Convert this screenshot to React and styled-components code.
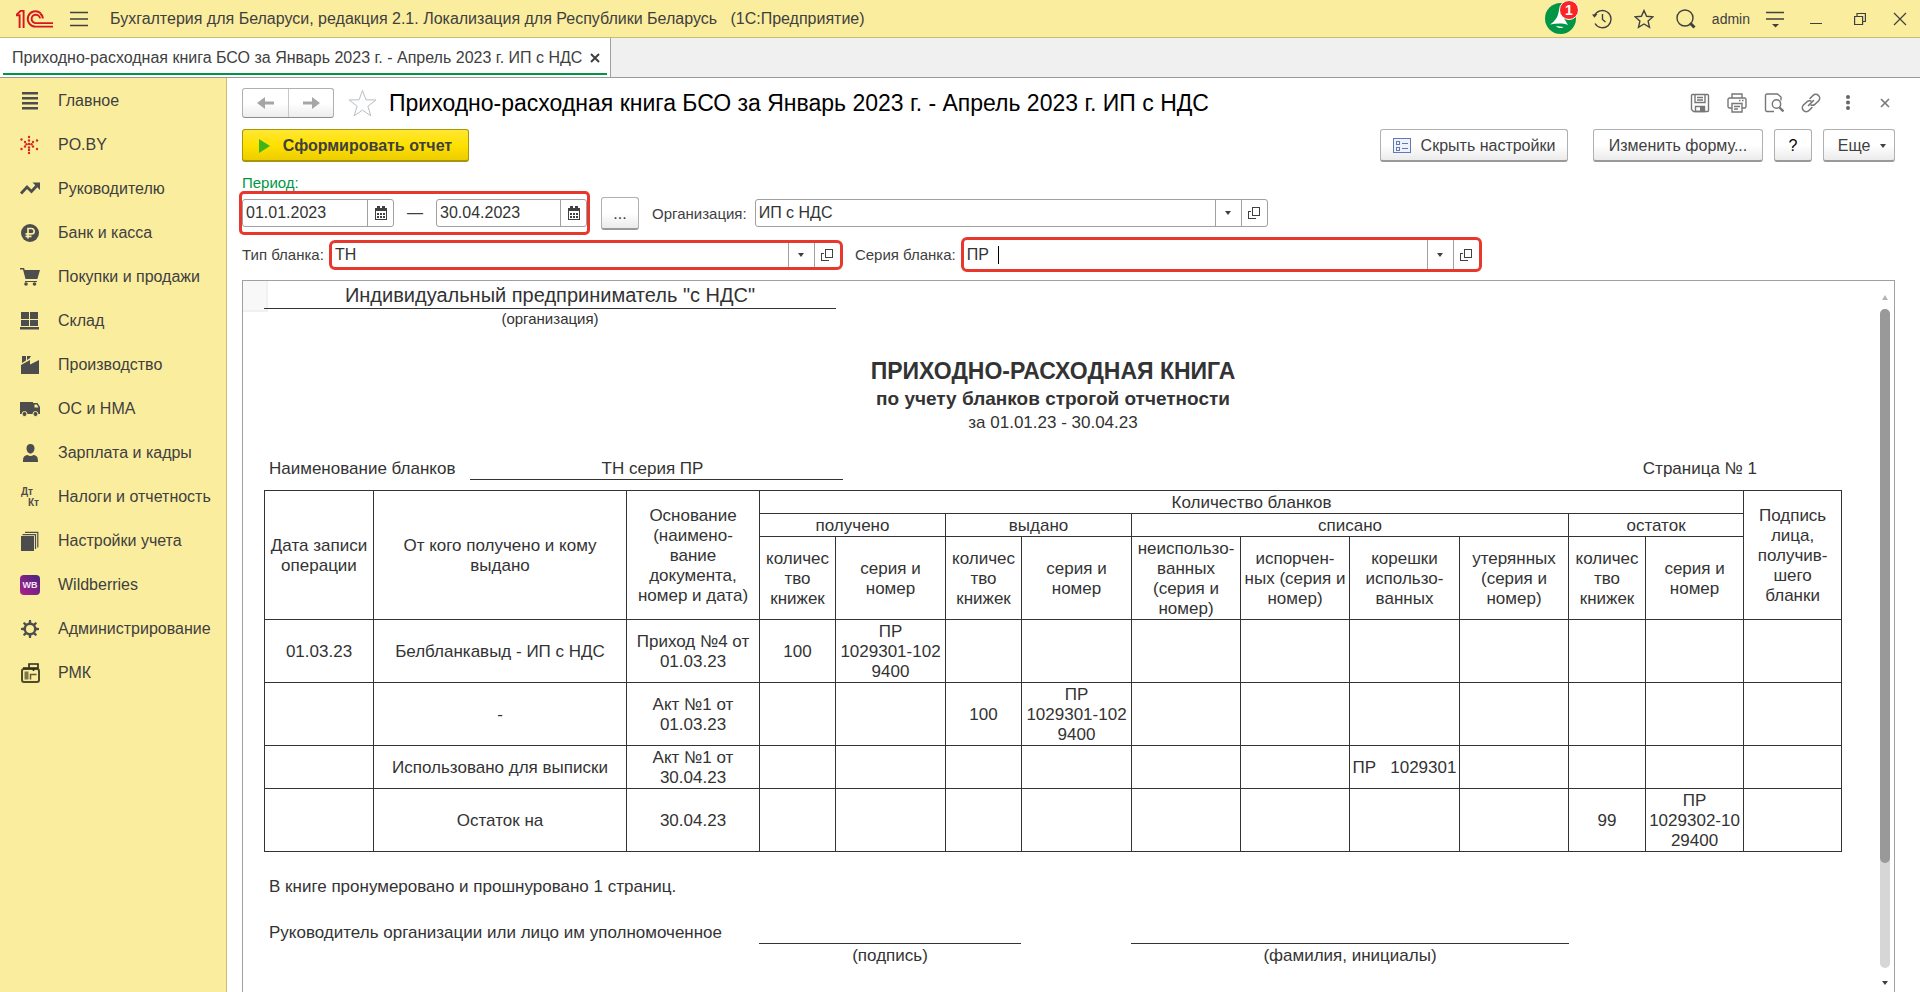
import React from 'react'
import styled, { createGlobalStyle } from 'styled-components'

const colors = {
  yellow: '#fbed9e',
  yellowLine: '#c9bd72',
  line: '#a0a0a0',
  text: '#404040',
  ink: '#333333',
  icon: '#4d4d4d',
  green: '#009646',
  mark: '#e8382d',
}

const GlobalStyle = createGlobalStyle`
  * { box-sizing: border-box; }
  body {
    margin: 0;
    background: white;
    font-family: "Liberation Sans", Arial, sans-serif;
    font-size: 16px;
    color: ${colors.text};
  }
  button, input { font: inherit; color: inherit; }
`

const Page = styled.div`
  height: 100vh;
  display: flex;
  flex-direction: column;
  overflow: hidden;
`
const TopBar = styled.header`
  height: 38px;
  flex-shrink: 0;
  display: flex;
  align-items: center;
  padding: 0 1px 0 15px;
  background-color: ${colors.yellow};
  border-bottom: 1px solid ${colors.yellowLine};
`
const PlainButton = styled.button`
  display: flex;
  align-items: center;
  justify-content: center;
  flex-shrink: 0;
  width: ${props => props.$width || 20}px;
  height: 32px;
  padding: 0;
  border: 0;
  background: none;
  cursor: pointer;
`
const AppTitle = styled.div`
  flex: 1;
  padding-left: 5px;
  white-space: pre;
`
const TopTools = styled.div`
  display: flex;
  align-items: center;
`
const BellButton = styled(PlainButton)`
  position: relative;
  margin-right: 6px;
`
const Badge = styled.span`
  position: absolute;
  top: -3px;
  right: -3px;
  width: 20px;
  height: 20px;
  border: 1px solid white;
  border-radius: 50%;
  background-color: #fb2424;
  color: white;
  font-size: 14px;
  font-weight: bold;
  line-height: 18px;
`
const UserName = styled.span`
  padding: 0 6px 0 5px;
  font-size: 14px;
`
const TabBar = styled.div`
  height: 40px;
  flex-shrink: 0;
  display: flex;
  background-color: #f0f0f0;
  border-bottom: 1px solid #999999;
`
const Tab = styled.div`
  display: flex;
  align-items: center;
  padding: 0 2px 0 12px;
  background: white;
  border-right: 1px solid ${colors.line};
  box-shadow: inset 3px 0 white, inset -3px 0 white, inset 0 -2px white, inset 0 -4px ${colors.green};
`
const Body = styled.div`
  flex: 1;
  min-height: 0;
  display: flex;
`
const Sidebar = styled.nav`
  width: 227px;
  flex-shrink: 0;
  padding-top: 1px;
  background-color: ${colors.yellow};
  border-right: 1px solid ${colors.yellowLine};
`
const MenuLink = styled.a`
  height: 44px;
  display: flex;
  align-items: center;
  gap: 18px;
  padding-left: 20px;
  color: ${colors.text};
  text-decoration: none;
`
const Main = styled.main`
  flex: 1;
  min-width: 0;
  display: flex;
  flex-direction: column;
  padding: 10px 25px 0 15px;
`
const TitleRow = styled.div`
  height: 30px;
  display: flex;
  align-items: center;
`
const NavButtons = styled.div`
  display: flex;
  height: 30px;
  border: 1px solid #b0b0b0;
  border-bottom-color: #8c8c8c;
  border-radius: 3px;
  background: linear-gradient(white 50%, #ededed);
  button + button { border-left: 1px solid #c8c8c8; }
`
const NavButton = styled(PlainButton)`
  height: 28px;
`
const StarButton = styled(PlainButton)`
  margin: 0 12px 0 14px;
`
const FormTitle = styled.h1`
  flex: 1;
  margin: 0;
  font-size: 23px;
  font-weight: normal;
  color: black;
`
const FormTools = styled.div`
  display: flex;
  gap: 17px;
`
const ButtonRow = styled.div`
  display: flex;
  align-items: center;
  gap: 11px;
  margin-top: 11px;
`
const Button = styled.button`
  display: flex;
  align-items: center;
  justify-content: center;
  gap: 10px;
  flex-shrink: 0;
  width: ${props => props.$width}px;
  height: 33px;
  padding: 2px 0 0;
  border: 1px solid #b0b0b0;
  border-bottom: 2px solid #999999;
  border-radius: 3px;
  background: linear-gradient(white 50%, #ebebeb);
  color: ${props => props.$dark ? 'black' : colors.text};
  cursor: pointer;
`
const PrimaryButton = styled(Button)`
  gap: 13px;
  margin-right: auto;
  border-color: #a89508;
  background: linear-gradient(#ffe733, #ffe100 50%, #eccd00);
  font-weight: bold;
`
const HideButton = styled(Button)`
  margin-right: 14px;
`
const MoreButton = styled(Button)`
  padding-left: 6px;
`
const PeriodLabel = styled.div`
  margin-top: 11px;
  font-size: 15px;
  line-height: 20px;
  color: ${colors.green};
`
const FieldRow = styled.div`
  display: flex;
  align-items: center;
  height: ${props => props.$height}px;
  margin-top: ${props => props.$top}px;
`
const PeriodGroup = styled.div`
  display: flex;
  align-items: center;
  flex: 0 0 345px;
  padding: 5px 0;
  margin-right: 14px;
  border-radius: 2px;
  outline: 3px solid ${colors.mark};
`
const Dash = styled.span`
  width: 42px;
  text-align: center;
`
const Label = styled.label`
  flex-shrink: 0;
  margin: 0 8px 0 ${props => props.$left || 0}px;
  font-size: 15px;
`
const Field = styled.div`
  position: relative;
  display: flex;
  flex: 0 1 ${props => props.$width}px;
  min-width: 0;
  height: ${props => props.$height || 28}px;
  border: ${props => props.$marked ? 0 : 1}px solid ${colors.line};
  border-radius: 3px;
  outline: ${props => props.$marked ? `3px solid ${colors.mark}` : 'none'};
`
const Input = styled.input`
  flex: 1;
  width: 0;
  min-width: 0;
  padding: 0 3px;
  border: 0;
  outline: 0;
  background: none;
  color: ${colors.ink};
`
const FieldButton = styled.button`
  display: flex;
  align-items: center;
  justify-content: center;
  width: 26px;
  padding: 0;
  border: 0;
  border-left: 1px solid ${colors.line};
  background: none;
`
const Caret = styled.span`
  position: absolute;
  left: 34px;
  top: 6px;
  width: 1px;
  height: 18px;
  background-color: black;
`
const ReportPanel = styled.section`
  flex: 1;
  min-height: 0;
  display: flex;
  margin-top: 8px;
  border: 1px solid ${colors.line};
  border-bottom: 0;
`
const Sheet = styled.div`
  position: relative;
  flex: 1;
  min-width: 0;
  padding: 0 38px 0 21px;
  overflow: hidden;
  font-size: 17px;
  color: ${colors.ink};
`
const SheetCorner = styled.div`
  position: absolute;
  z-index: -1;
  top: 0;
  left: 0;
  width: 25px;
  height: 31px;
  background-color: #f8f8f8;
  border-right: 2px solid #f1f1f1;
  border-bottom: 2px solid #f1f1f1;
`
const OrgBlock = styled.div`
  width: 572px;
  text-align: center;
`
const OrgName = styled.div`
  height: 28px;
  border-bottom: 1px solid ${colors.ink};
  font-size: 20px;
  line-height: 28px;
`
const OrgCaption = styled.div`
  font-size: 15px;
  line-height: 20px;
`
const Heading = styled.div`
  margin-top: 28px;
  text-align: center;
  line-height: 20px;
`
const BookTitle = styled.h2`
  margin: 0;
  font-size: 23px;
  line-height: 28px;
`
const BookSubtitle = styled.h3`
  margin: 0;
  padding: 2px 0;
  font-size: 19px;
  line-height: 24px;
`
const NameRow = styled.div`
  display: flex;
  align-items: flex-end;
  margin: 23px 0 10px;
  padding: 0 85px 0 5px;
`
const NameText = styled.div`
  height: 24px;
  line-height: 26px;
`
const NameLabel = styled(NameText)`
  width: 201px;
`
const NameValue = styled(NameText)`
  width: 373px;
  margin-right: auto;
  padding-right: 8px;
  border-bottom: 1px solid ${colors.ink};
  text-align: center;
`
const Table = styled.table`
  width: 100%;
  table-layout: fixed;
  border-collapse: collapse;
  line-height: 20px;
  text-align: center;
  white-space: pre-line;
`
const Row = styled.tr`
  height: ${props => props.$height}px;
`
const HeadCell = styled.th`
  padding: 2px 0 0;
  border: 1px solid ${colors.ink};
  font-weight: normal;
`
const Cell = styled.td`
  padding: 2px 0 0;
  border: 1px solid ${colors.ink};
  white-space: pre-wrap;
`
const Footnote = styled.div`
  margin-top: 25px;
  padding-left: 5px;
  line-height: 20px;
`
const SignRow = styled.div`
  display: flex;
  margin-top: 24px;
  padding-left: 5px;
  line-height: 24px;
`
const SignText = styled.div`
  width: 490px;
`
const Sign = styled.div`
  width: ${props => props.$width}px;
  margin-right: 110px;
  padding-top: 22px;
  text-align: center;
`
const SignCaption = styled.div`
  border-top: 1px solid ${colors.ink};
`
const Scroll = styled.div`
  display: flex;
  flex-direction: column;
  align-items: center;
  width: 10px;
  margin-right: 4px;
`
const ScrollButton = styled.button`
  height: ${props => props.$height}px;
  padding: 0;
  border: 0;
  background: none;
`
const Track = styled.div`
  flex: 1;
  width: 10px;
  border-radius: 5px;
  background-color: #d6d6d6;
`
const Thumb = styled.div`
  height: 84%;
  border-radius: 5px;
  background-color: #999999;
`

const Svg = ({ w = 20, h = 20, children, ...rest }) => (
  <svg width={w} height={h} viewBox={`0 0 ${w} ${h}`} fill="none" aria-hidden="true" {...rest}>
    {children}
  </svg>
)

const Logo = () => (
  <Svg w={38} h={20} stroke="#d8161e" strokeWidth="1.9">
    <path d="M1 6.2h3.6V19" />
    <path d="M1.6 5.8L5.6 1.9H8.6V19" />
    <path d="M25.6 4.2A7.7 7.7 0 1 0 21 17.6H38" />
    <path d="M25 9.4A4.2 4.2 0 1 0 21 14.1H38" />
    <path d="M25.2 4.6a5.8 5.8 0 0 1 2.6 4.8" />
  </Svg>
)

const Down = () => (
  <Svg w={6} h={4}><path d="M0 0h6L3 4z" fill={colors.text} /></Svg>
)

const OpenIcon = () => (
  <Svg w={12} h={12} stroke={colors.text} shapeRendering="crispEdges">
    <path d="M4.500 .5h7v8h-7z M2.500 4.500h-2v7h7v-1" />
  </Svg>
)

const CalendarIcon = () => (
  <Svg w={12} h={14} shapeRendering="crispEdges">
    <path d="M.5 2.500h11v11H.5z" stroke={colors.text} />
    <path d="M0 2h12v3H0z M2 0h3v2H2z M7 0h3v2H7z" fill={colors.text} />
    <path d="M2 7h2v2H2z M5 7h2v2H5z M8 7h2v2H8z M2 10h2v2H2z M5 10h2v2H5z M8 10h2v2H8z" fill={colors.text} />
  </Svg>
)

const gearTeeth = [0, 45, 90, 135, 180, 225, 270, 315]
const poDots = [
  [9, 2], [9, 5.500], [9, 9], [9, 12.500], [9, 18], [9, 15], [5, 7], [5, 11.500], [13, 7], [13, 11.500],
  [1.500, 4.500], [1.500, 14], [17, 5.500], [17, 14], [6.500, 9.200], [11.500, 9.200],
]

const menu = [
  { title: 'Главное', icon: <path d="M2 1h16v2.500H2zM2 6h16v2.500H2zM2 11h16v2.500H2zM2 16h16v2.500H2z" fill={colors.icon} /> },
  { title: 'PO.BY', icon: poDots.map(([x, y]) => <circle key={`${x}-${y}`} cx={x} cy={y} r="1.2" fill="#d9261c" />) },
  {
    title: 'Руководителю',
    icon: <>
      <path d="M1 14.500L7 8l4.500 4.500L17 6.500" stroke={colors.icon} strokeWidth="2.800" />
      <path d="M12.500 3.500H20V11z" fill={colors.icon} />
    </>
  },
  {
    title: 'Банк и касса',
    icon: <>
      <circle cx="10" cy="10" r="9" fill={colors.icon} />
      <path d="M8 15.500V5.500h3.500a2.700 2.700 0 0 1 0 5.400H5.500 M5.500 13.300h6" stroke={colors.yellow} strokeWidth="1.700" />
    </>
  },
  {
    title: 'Покупки и продажи',
    icon: <>
      <path d="M0 1h4l.8 2H20l-2.600 9H5.500L3 2.500H0z" fill={colors.icon} />
      <path d="M5 14.500h12" stroke={colors.icon} />
      <circle cx="6" cy="17" r="1.800" fill={colors.icon} />
      <circle cx="14.500" cy="17" r="1.800" fill={colors.icon} />
    </>
  },
  { title: 'Склад', icon: <path d="M1 1h8v7H1zM10 1h8v7h-8zM1 9h8v6H1zM10 9h8v6h-8zM0 16h19v2.500H0z" fill={colors.icon} /> },
  {
    title: 'Производство',
    icon: <path d="M1 19v-9l9-5v4.500l9-4.500V19z M2 1h4v4.500L2 8z M7 1h4L9.500 3.500 7 5z" fill={colors.icon} />
  },
  {
    title: 'ОС и НМА',
    icon: <>
      <path d="M0 3h13v12H0z M13 4h4.500L20 8v7h-7z" fill={colors.icon} />
      <path d="M14.500 5.500h2.300l1.700 3h-4z" fill={colors.yellow} />
      <circle cx="4.500" cy="15" r="2.500" fill={colors.icon} stroke={colors.yellow} />
      <circle cx="15.500" cy="15" r="2.500" fill={colors.icon} stroke={colors.yellow} />
    </>
  },
  {
    title: 'Зарплата и кадры',
    icon: <path d="M10.500 1c2.600 0 4 1.700 4 4.200 0 2.700-1.600 5.300-4 5.300s-4-2.600-4-5.300C6.500 2.700 7.900 1 10.500 1z M3 19c0-5 .8-6.300 4.500-7 1.800 1.400 4.200 1.400 6 0 3.700.7 4.500 2 4.500 7z" fill={colors.icon} />
  },
  {
    title: 'Налоги и отчетность',
    icon: <g fill={colors.icon} fontSize="10" fontWeight="bold">
      <text x="1" y="8">Дт</text>
      <text x="8" y="19">Кт</text>
    </g>
  },
  {
    title: 'Настройки учета',
    icon: <>
      <path d="M1 5h13v15H1z" fill={colors.icon} />
      <path d="M2.500 3.600h13V18 M5 1.300h12.800V16.500" stroke={colors.icon} strokeWidth="1.200" />
    </>
  },
  {
    title: 'Wildberries',
    icon: <>
      <defs>
        <linearGradient id="wb" x1="0" y1="1" x2="1" y2="0">
          <stop offset="0" stopColor="#b0208a" />
          <stop offset="1" stopColor="#46257f" />
        </linearGradient>
      </defs>
      <rect width="20" height="20" rx="4" fill="url(#wb)" />
      <text x="10" y="13" fontSize="9" fontWeight="bold" textAnchor="middle" fill="#f3e3f5">WB</text>
    </>
  },
  {
    title: 'Администрирование',
    icon: <>
      <circle cx="10" cy="10" r="5.200" stroke={colors.icon} strokeWidth="2.400" />
      {gearTeeth.map(a => <path key={a} d="M8.600 4.500L9 1h2l.4 3.500z" fill={colors.icon} transform={`rotate(${a} 10 10)`} />)}
    </>
  },
  {
    title: 'РМК',
    icon: <>
      <rect x="2" y="6" width="17" height="13" rx="2" stroke="#4f4a2c" strokeWidth="2" />
      <path d="M9 1h9v4H9z M13.500 5v3 M3 5h5" stroke="#2b2818" strokeWidth="1.600" />
      <path d="M4.500 8.500h4v8h-4z" fill="#7d764a" />
      <path d="M10.500 16.500v-5h6" stroke="#5d5735" strokeWidth="1.500" />
    </>
  },
]

const columns = [109, 253, 133, 76, 110, 76, 110, 109, 109, 110, 109, 77, 98, 98]

const rows = [
  { height: 63, cells: ['01.03.23', 'Белбланкавыд - ИП с НДС', 'Приход №4 от\n01.03.23', '100', 'ПР\n1029301-102\n9400', '', '', '', '', '', '', '', '', ''] },
  { height: 63, cells: ['', '-', 'Акт №1 от\n01.03.23', '', '', '100', 'ПР\n1029301-102\n9400', '', '', '', '', '', '', ''] },
  { height: 43, cells: ['', 'Использовано для выписки', 'Акт №1 от\n30.04.23', '', '', '', '', '', '', 'ПР   1029301', '', '', '', ''] },
  { height: 63, cells: ['', 'Остаток на', '30.04.23', '', '', '', '', '', '', '', '', '99', 'ПР\n1029302-10\n29400', ''] },
]

const subHeads = [
  'количес\nтво\nкнижек', 'серия и\nномер', 'количес\nтво\nкнижек', 'серия и\nномер',
  'неиспользо-\nванных\n(серия и\nномер)', 'испорчен-\nных (серия и\nномер)', 'корешки\nиспользо-\nванных',
  'утерянных\n(серия и\nномер)', 'количес\nтво\nкнижек', 'серия и\nномер',
]

const DateField = ({ width, value, label }) => (
  <Field $width={width}>
    <Input defaultValue={value} aria-label={label} />
    <FieldButton aria-label="Календарь"><CalendarIcon /></FieldButton>
  </Field>
)

const ComboField = ({ id, value, children, ...rest }) => (
  <Field {...rest}>
    <Input id={id} defaultValue={value} />
    {children}
    <FieldButton aria-label="Выбрать"><Down /></FieldButton>
    <FieldButton aria-label="Открыть"><OpenIcon /></FieldButton>
  </Field>
)

const Header = () => (
  <TopBar>
    <Logo />
    <PlainButton $width={52} aria-label="Меню">
      <Svg w={18} h={16} stroke={colors.text} strokeWidth="1.500"><path d="M0 1.500h18M0 8h18M0 14.500h18" /></Svg>
    </PlainButton>
    <AppTitle>Бухгалтерия для Беларуси, редакция 2.1. Локализация для Республики Беларусь   (1С:Предприятие)</AppTitle>
    <TopTools>
      <BellButton $width={31} aria-label="Оповещения">
        <Svg w={31} h={31}>
          <circle cx="15.500" cy="15.500" r="15.500" fill={colors.green} />
          <path d="M14 7l9 15c-6-2.500-12-1.500-18-.5 6-4 8-8 9-14.500z" fill="white" />
          <path d="M11 23c2 2.600 6 2.600 7.500 1z" fill="white" />
        </Svg>
        <Badge>1</Badge>
      </BellButton>
      <PlainButton $width={41} aria-label="История">
        <Svg stroke={colors.text} strokeWidth="1.400">
          <path d="M2.400 7A8.600 8.600 0 1 1 3 14.500" />
          <path d="M10.500 5v5.500l3 2.500" />
          <path d="M0 5.500l5.500-.5-3 3.800z" fill={colors.text} stroke="none" />
        </Svg>
      </PlainButton>
      <PlainButton $width={42} aria-label="Избранное">
        <Svg stroke={colors.text} strokeWidth="1.400">
          <path d="M10 1.500l2.600 5.800 6.200.6-4.700 4.200 1.400 6.200L10 15l-5.500 3.300 1.400-6.200L1.200 7.900l6.200-.6z" />
        </Svg>
      </PlainButton>
      <PlainButton $width={42} aria-label="Поиск">
        <Svg stroke={colors.text} strokeWidth="1.400">
          <circle cx="9" cy="9" r="8" />
          <path d="M14 14l4.500 4.500" strokeWidth="3" />
        </Svg>
      </PlainButton>
      <UserName>admin</UserName>
      <PlainButton $width={38} aria-label="Сервис">
        <Svg w={18} h={18} stroke={colors.text} strokeWidth="1.500">
          <path d="M0 2.500h18M0 9h18" />
          <path d="M6 14h7l-3.500 3.500z" fill={colors.text} stroke="none" />
        </Svg>
      </PlainButton>
      <PlainButton $width={44} aria-label="Свернуть">
        <Svg w={12} h={12} stroke={colors.text}><path d="M0 10.500h12" /></Svg>
      </PlainButton>
      <PlainButton $width={43} aria-label="Развернуть">
        <Svg w={12} h={12} stroke={colors.text} strokeWidth="1.200"><path d="M.6 3.500h8v8h-8z M3 3.500v-3h8.400v8H8.600" /></Svg>
      </PlainButton>
      <PlainButton $width={38} aria-label="Закрыть">
        <Svg w={14} h={14} stroke={colors.text} strokeWidth="1.200"><path d="M1 1l12 12M13 1L1 13" /></Svg>
      </PlainButton>
    </TopTools>
  </TopBar>
)

const Report = () => (
  <ReportPanel>
    <Sheet>
      <SheetCorner />
      <OrgBlock>
        <OrgName>Индивидуальный предприниматель "с НДС"</OrgName>
        <OrgCaption>(организация)</OrgCaption>
      </OrgBlock>
      <Heading>
        <BookTitle>ПРИХОДНО-РАСХОДНАЯ КНИГА</BookTitle>
        <BookSubtitle>по учету бланков строгой отчетности</BookSubtitle>
        за 01.01.23 - 30.04.23
      </Heading>
      <NameRow>
        <NameLabel>Наименование бланков</NameLabel>
        <NameValue>ТН серия ПР</NameValue>
        <NameText>Страница № 1</NameText>
      </NameRow>
      <Table>
        <colgroup>
          {columns.map((width, i) => <col key={i} style={{ width }} />)}
        </colgroup>
        <thead>
          <Row $height={23}>
            <HeadCell rowSpan={3}>{'Дата записи\nоперации'}</HeadCell>
            <HeadCell rowSpan={3}>{'От кого получено и кому\nвыдано'}</HeadCell>
            <HeadCell rowSpan={3}>{'Основание\n(наимено-\nвание\nдокумента,\nномер и дата)'}</HeadCell>
            <HeadCell colSpan={10}>Количество бланков</HeadCell>
            <HeadCell rowSpan={3}>{'Подпись\nлица,\nполучив-\nшего\nбланки'}</HeadCell>
          </Row>
          <Row $height={23}>
            <HeadCell colSpan={2}>получено</HeadCell>
            <HeadCell colSpan={2}>выдано</HeadCell>
            <HeadCell colSpan={4}>списано</HeadCell>
            <HeadCell colSpan={2}>остаток</HeadCell>
          </Row>
          <Row $height={83}>
            {subHeads.map((text, i) => <HeadCell key={i}>{text}</HeadCell>)}
          </Row>
        </thead>
        <tbody>
          {rows.map((row, i) => (
            <Row key={i} $height={row.height}>
              {row.cells.map((text, j) => <Cell key={j}>{text}</Cell>)}
            </Row>
          ))}
        </tbody>
      </Table>
      <Footnote>В книге пронумеровано и прошнуровано 1 страниц.</Footnote>
      <SignRow>
        <SignText>Руководитель организации или лицо им уполномоченное</SignText>
        <Sign $width={262}><SignCaption>(подпись)</SignCaption></Sign>
        <Sign $width={438}><SignCaption>(фамилия, инициалы)</SignCaption></Sign>
      </SignRow>
    </Sheet>
    <Scroll>
      <ScrollButton $height={28} aria-label="Вверх">
        <Svg w={6} h={5}><path d="M3 0l3 5H0z" fill="#b5b5b5" /></Svg>
      </ScrollButton>
      <Track><Thumb /></Track>
      <ScrollButton $height={24} aria-label="Вниз"><Down /></ScrollButton>
    </Scroll>
  </ReportPanel>
)

const App = () => (
  <Page>
    <GlobalStyle />
    <Header />
    <TabBar>
      <Tab>
        Приходно-расходная книга БСО за Январь 2023 г. - Апрель 2023 г. ИП с НДС
        <PlainButton $width={26} aria-label="Закрыть вкладку">
          <Svg w={10} h={10} stroke={colors.text} strokeWidth="2"><path d="M1 1l8 8M9 1L1 9" /></Svg>
        </PlainButton>
      </Tab>
    </TabBar>
    <Body>
      <Sidebar>
        {menu.map(item => (
          <MenuLink key={item.title} href="#">
            <Svg>{item.icon}</Svg>
            {item.title}
          </MenuLink>
        ))}
      </Sidebar>
      <Main>
        <TitleRow>
          <NavButtons>
            <NavButton $width={45} aria-label="Назад">
              <Svg w={18} h={14}><path d="M0 7l8-6v4.500h9v3H8V13z" fill="#a6a6a6" /></Svg>
            </NavButton>
            <NavButton $width={45} aria-label="Вперед">
              <Svg w={18} h={14}><path d="M18 7l-8-6v4.500H1v3h9V13z" fill="#a6a6a6" /></Svg>
            </NavButton>
          </NavButtons>
          <StarButton $width={29} aria-label="В избранное">
            <Svg w={29} h={28} stroke="#b9bec4">
              <path d="M14.500 1.500l3.400 9.300 10 .2-8 6.200 2.900 9.600-8.300-5.700-8.300 5.700 2.900-9.600-8-6.200 10-.2z" />
            </Svg>
          </StarButton>
          <FormTitle>Приходно-расходная книга БСО за Январь 2023 г. - Апрель 2023 г. ИП с НДС</FormTitle>
          <FormTools>
            <PlainButton aria-label="Сохранить">
              <Svg stroke="#777777" strokeWidth="1.400">
                <path d="M1.500 2.500a1 1 0 0 1 1-1h15a1 1 0 0 1 1 1v15a1 1 0 0 1-1 1H3.500l-2-2z M5 1.500v8h10v-8 M7 4.500h6 M7 7h6" />
                <path d="M5.500 13.500h9v5h-9z" />
                <path d="M10 14h4v4h-4z" fill="#777777" stroke="none" />
              </Svg>
            </PlainButton>
            <PlainButton aria-label="Печать">
              <Svg stroke="#777777" strokeWidth="1.400">
                <path d="M5 5V1h10v4 M5 15H2.500A1.500 1.500 0 0 1 1 13.500v-7A1.500 1.500 0 0 1 2.500 5h15A1.500 1.500 0 0 1 19 6.500v7a1.500 1.500 0 0 1-1.500 1.500H15" />
                <path d="M5 10.500h10V19H5z M7 13.500h6 M7 16h4 M12 7.500h1.500 M15 7.500h1.500" />
              </Svg>
            </PlainButton>
            <PlainButton aria-label="Просмотр">
              <Svg stroke="#777777" strokeWidth="1.400">
                <path d="M10 18.500H3A1.500 1.500 0 0 1 1.500 17V2.500A1.500 1.500 0 0 1 3 1h10.500L17 4v3.500" />
                <circle cx="12.500" cy="11" r="4.200" />
                <path d="M15.500 14.500l4 4" strokeWidth="2.400" />
              </Svg>
            </PlainButton>
            <PlainButton aria-label="Ссылка">
              <Svg stroke="#777777" strokeWidth="1.600" strokeLinecap="round">
                <path d="M9 5.500l3-3a3.800 3.800 0 0 1 5.500 5.500l-3.800 3.500a3.800 3.800 0 0 1-3.700.5" />
                <path d="M11 14.500l-3 3A3.800 3.800 0 0 1 2.500 12l3.800-3.500a3.800 3.800 0 0 1 3.700-.5" />
                <path d="M7.500 12.500l5-5" />
              </Svg>
            </PlainButton>
            <PlainButton aria-label="Еще действия">
              <Svg>
                <circle cx="10" cy="4" r="2" fill="#666666" />
                <circle cx="10" cy="9.500" r="2" fill="#666666" />
                <circle cx="10" cy="15" r="2" fill="#666666" />
              </Svg>
            </PlainButton>
            <PlainButton aria-label="Закрыть">
              <Svg w={10} h={10} stroke="#777777" strokeWidth="1.600"><path d="M1 1l8 8M9 1L1 9" /></Svg>
            </PlainButton>
          </FormTools>
        </TitleRow>
        <ButtonRow>
          <PrimaryButton $width={227}>
            <Svg w={11} h={14}><path d="M0 0l11 7-11 7z" fill="#3fb618" /></Svg>
            Сформировать отчет
          </PrimaryButton>
          <HideButton $width={188}>
            <Svg w={18} h={16} stroke="#6478b4" shapeRendering="crispEdges">
              <path d="M.5 .5h17v14H.5z" fill="#eef2fb" />
              <path d="M3.500 3.500h3v3h-3z M3.500 9.500h3v3h-3z M9 5.500h6 M9 10.500h6" />
            </Svg>
            Скрыть настройки
          </HideButton>
          <Button $width={170}>Изменить форму...</Button>
          <Button $width={38} $dark>?</Button>
          <MoreButton $width={72}>Еще <Down /></MoreButton>
        </ButtonRow>
        <PeriodLabel>Период:</PeriodLabel>
        <FieldRow $height={38} $top={1}>
          <PeriodGroup>
            <DateField width={152} value="01.01.2023" label="Начало периода" />
            <Dash>—</Dash>
            <DateField width={151} value="30.04.2023" label="Конец периода" />
          </PeriodGroup>
          <Button $width={38} aria-label="Выбрать период">...</Button>
          <Label htmlFor="org" $left={13}>Организация:</Label>
          <ComboField id="org" value="ИП с НДС" $width={513} />
        </FieldRow>
        <FieldRow $height={35} $top={5}>
          <Label htmlFor="kind">Тип бланка:</Label>
          <ComboField id="kind" value="ТН" $width={508} $height={24} $marked />
          <Label htmlFor="series" $left={15}>Серия бланка:</Label>
          <ComboField id="series" value="ПР" $width={515} $height={29} $marked><Caret /></ComboField>
        </FieldRow>
        <Report />
      </Main>
    </Body>
  </Page>
)

export default App
